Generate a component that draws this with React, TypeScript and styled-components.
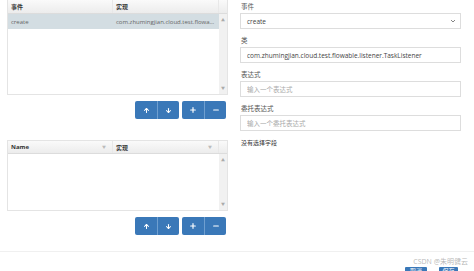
import styled, { createGlobalStyle } from 'styled-components';
import { ArrowUp, ArrowDown, Plus, Minus } from 'lucide-react';

const GlobalStyle = createGlobalStyle`
  body {
    margin: 0;
    background: #fff;
    font-family: 'Open Sans', 'Noto Sans CJK SC', sans-serif;
    color: #555;
  }
`;

const Page = styled.div`
  position: relative;
  width: 474px;
  height: 271px;
  overflow: hidden;
  display: flex;
  flex-direction: column;
`;

const Main = styled.div`
  flex: 1;
  display: flex;
  gap: 12px;
  padding: 0 13px 0 7px;
`;

const Column = styled.div`
  width: 221px;
  display: flex;
  flex-direction: column;
`;

const RightColumn = styled(Column)`
  padding-top: 1px;
`;

const Table = styled.div<{ h: number; mt?: number }>`
  height: ${(p) => p.h}px;
  margin-top: ${(p) => p.mt ?? 0}px;
  box-sizing: border-box;
  border: 1px solid #e4e4e4;
  border-top: none;
  display: flex;
  flex-direction: column;
  font-size: 6px;
`;

const HeaderRow = styled.div<{ bordered?: boolean }>`
  height: 14px;
  flex: none;
  display: grid;
  grid-template-columns: 105px 1fr 8px;
  align-items: center;
  background: linear-gradient(#fafafa, #ececec);
  border-top: ${(p) => (p.bordered ? '1px solid #e4e4e4' : 'none')};
  border-bottom: 1px solid #dcdcdc;
  box-sizing: border-box;
  color: #333;
  font-weight: 700;
`;

const HeaderCell = styled.div`
  display: flex;
  align-items: center;
  justify-content: space-between;
  padding: 0 6px 0 3px;
  height: 100%;
  border-right: 1px solid #e8e8e8;
`;

const SortArrow = styled.span`
  color: #bbb;
  font-size: 4px;
  font-weight: 400;
`;

const Body = styled.div`
  flex: 1;
  display: flex;
`;

const Rows = styled.div`
  flex: 1;
  min-width: 0;
`;

const Row = styled.div<{ selected?: boolean }>`
  display: grid;
  grid-template-columns: 105px minmax(0, 1fr);
  height: 15px;
  align-items: center;
  background: ${(p) => (p.selected ? '#d3dde2' : 'transparent')};
  color: #666;
`;

const Cell = styled.div`
  padding: 0 2px 0 3px;
  white-space: nowrap;
  overflow: hidden;
  text-overflow: ellipsis;
`;

const Scrollbar = styled.div`
  width: 8px;
  background: #f1f1f1;
  display: flex;
  flex-direction: column;
  justify-content: space-between;
  align-items: center;
  color: #aaa;
  font-size: 4px;
  padding: 3px 0;
  box-sizing: border-box;
`;

const ButtonBar = styled.div`
  display: flex;
  justify-content: flex-end;
  gap: 3px;
  padding-right: 2px;
  margin-top: 6px;
`;

const ButtonGroup = styled.div`
  display: flex;
  border-radius: 2px;
  overflow: hidden;
`;

const IconButton = styled.button`
  width: 22px;
  height: 18px;
  padding: 0;
  border: none;
  background: #3a78b8;
  color: #fff;
  display: flex;
  align-items: center;
  justify-content: center;
  & + & {
    border-left: 1px solid #6f9fd0;
  }
`;

const Label = styled.div`
  height: 12px;
  line-height: 12px;
  font-size: 6.5px;
  color: #555;
  padding-left: 1px;
`;

const Field = styled.div`
  margin-bottom: 6px;
`;

const Input = styled.input`
  display: block;
  width: 100%;
  height: 16px;
  box-sizing: border-box;
  border: 1px solid #ddd;
  padding: 0 6px;
  font-family: inherit;
  font-size: 6.5px;
  color: #444;
  outline: none;
  &::placeholder {
    color: #aaa;
  }
`;

const Select = styled.div`
  height: 16px;
  box-sizing: border-box;
  border: 1px solid #ddd;
  padding: 0 4px 0 6px;
  display: flex;
  align-items: center;
  justify-content: space-between;
  font-size: 6.5px;
  color: #444;
`;

const Note = styled.div`
  font-size: 6px;
  color: #333;
  line-height: 12px;
  padding-left: 1px;
`;

const Footer = styled.div`
  height: 20px;
  flex: none;
  border-top: 1px solid #f0f0f0;
  display: flex;
  justify-content: flex-end;
  align-items: flex-start;
  gap: 12px;
  padding: 15px 16px 0 0;
  box-sizing: border-box;
`;

const FooterButton = styled.button<{ w: number }>`
  width: ${(p) => p.w}px;
  height: 16px;
  padding: 0;
  border: none;
  border-radius: 1px;
  background: #3a78b8;
  color: #fff;
  font-family: inherit;
  font-size: 6px;
  line-height: 9px;
  display: flex;
  justify-content: center;
`;

const Watermark = styled.div`
  position: absolute;
  right: 6px;
  bottom: 5px;
  font-size: 7px;
  color: rgba(160, 160, 160, 0.75);
  white-space: nowrap;
`;

function Buttons() {
  return (
    <ButtonBar>
      <ButtonGroup>
        <IconButton>
          <ArrowUp size={7} strokeWidth={3.5} />
        </IconButton>
        <IconButton>
          <ArrowDown size={7} strokeWidth={3.5} />
        </IconButton>
      </ButtonGroup>
      <ButtonGroup>
        <IconButton>
          <Plus size={8} strokeWidth={3.5} />
        </IconButton>
        <IconButton>
          <Minus size={8} strokeWidth={3.5} />
        </IconButton>
      </ButtonGroup>
    </ButtonBar>
  );
}

function Chevron() {
  return (
    <svg width="6" height="4" viewBox="0 0 6 4">
      <path d="M1 1 L3 3 L5 1" fill="none" stroke="#777" strokeWidth="0.9" />
    </svg>
  );
}

export default function App() {
  return (
    <Page>
      <GlobalStyle />
      <Main>
        <Column>
          <Table h={95}>
            <HeaderRow>
              <HeaderCell>事件</HeaderCell>
              <HeaderCell>实现</HeaderCell>
              <span />
            </HeaderRow>
            <Body>
              <Rows>
                <Row selected>
                  <Cell>create</Cell>
                  <Cell>com.zhumingjian.cloud.test.flowable.listener.TaskListener</Cell>
                </Row>
              </Rows>
              <Scrollbar>
                <span>▲</span>
                <span>▼</span>
              </Scrollbar>
            </Body>
          </Table>
          <Buttons />
          <Table h={71} mt={21}>
            <HeaderRow bordered>
              <HeaderCell>
                Name <SortArrow>▼</SortArrow>
              </HeaderCell>
              <HeaderCell>
                实现 <SortArrow>▼</SortArrow>
              </HeaderCell>
              <span />
            </HeaderRow>
            <Body>
              <Rows />
              <Scrollbar>
                <span>▲</span>
                <span>▼</span>
              </Scrollbar>
            </Body>
          </Table>
          <Buttons />
        </Column>
        <RightColumn>
          <Field>
            <Label>事件</Label>
            <Select>
              create
              <Chevron />
            </Select>
          </Field>
          <Field>
            <Label>类</Label>
            <Input defaultValue="com.zhumingjian.cloud.test.flowable.listener.TaskListener" />
          </Field>
          <Field>
            <Label>表达式</Label>
            <Input placeholder="输入一个表达式" />
          </Field>
          <Field>
            <Label>委托表达式</Label>
            <Input placeholder="输入一个委托表达式" />
          </Field>
          <Note>没有选择字段</Note>
        </RightColumn>
      </Main>
      <Footer>
        <FooterButton w={22}>取消</FooterButton>
        <FooterButton w={19}>保存</FooterButton>
      </Footer>
      <Watermark>CSDN @朱明健云</Watermark>
    </Page>
  );
}
